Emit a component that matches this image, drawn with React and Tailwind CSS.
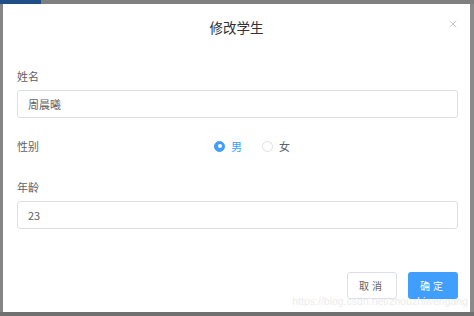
import { X } from 'lucide-react'

const FONT = { fontFamily: '"Noto Sans CJK SC", "Noto Sans", sans-serif' }

function Field({ label, value }) {
  return (
    <div>
      <div className="text-[11px] leading-[16px] text-[#606266]">{label}</div>
      <div className="mt-[6px] h-[28px] w-[441px] rounded-[3px] border border-[#dcdfe6] bg-white pl-[10px] flex items-center text-[11px] text-[#606266]">
        {value}
      </div>
    </div>
  )
}

function Radio({ label, checked }) {
  return (
    <label className="flex items-center gap-[6px]">
      <span
        className={`w-[11px] h-[11px] rounded-full flex items-center justify-center ${
          checked ? 'bg-[#409eff] border border-[#409eff]' : 'border border-[#dcdfe6] bg-white'
        }`}
      >
        {checked && <span className="w-[4px] h-[4px] rounded-full bg-white" />}
      </span>
      <span className={`text-[11px] ${checked ? 'text-[#409eff]' : 'text-[#606266]'}`}>{label}</span>
    </label>
  )
}

export default function App() {
  return (
    <div className="w-[474px] h-[316px] bg-[#7d7d7d] flex flex-col overflow-hidden" style={FONT}>
      {/* top strip */}
      <div className="h-[4px] flex">
        <div className="w-[41px] bg-[#1f4f86]" />
        <div className="flex-1 bg-[#7f7f7f]" />
      </div>

      <div className="flex">
        <div className="w-[3px] bg-[#858585]" />

        {/* dialog */}
        <div className="relative w-[467px] h-[308px] bg-white flex flex-col">
          <div className="h-[46px] flex items-center justify-center relative">
            <span className="text-[13.5px] text-[#303133]">修改学生</span>
            <X size={12} strokeWidth={1.3} className="absolute right-[11px] top-[14px] text-[#a8abb2]" />
          </div>

          <div className="pl-[14px] mt-[18px]">
            <Field label="姓名" value="周晨曦" />

            <div className="mt-[20px] h-[16px] flex items-center">
              <span className="text-[11px] text-[#606266] w-[197px]">性别</span>
              <div className="flex items-center gap-[20px]">
                <Radio label="男" checked />
                <Radio label="女" />
              </div>
            </div>

            <div className="mt-[25px]">
              <Field label="年龄" value="23" />
            </div>
          </div>

          <div className="mt-auto mb-[13px] pr-[12px] flex justify-end gap-[11px]">
            <button className="w-[50px] h-[27px] rounded-[3px] border border-[#dcdfe6] bg-white text-[10px] text-[#606266] tracking-[3px]">
              取消
            </button>
            <button className="w-[50px] h-[27px] rounded-[3px] bg-[#409eff] text-[10px] text-white tracking-[3px]">
              确定
            </button>
          </div>

          {/* watermark */}
          <div className="absolute right-[2px] bottom-[2px] text-[10.5px] text-[#ececec]" style={{ fontFamily: '"Liberation Sans", sans-serif' }}>
            https://blog.csdn.net/zhouzhiwengang
          </div>
        </div>

        <div className="flex-1 bg-[#8a8a8a]" />
      </div>

      <div className="flex-1 bg-[#707070]" />
    </div>
  )
}
